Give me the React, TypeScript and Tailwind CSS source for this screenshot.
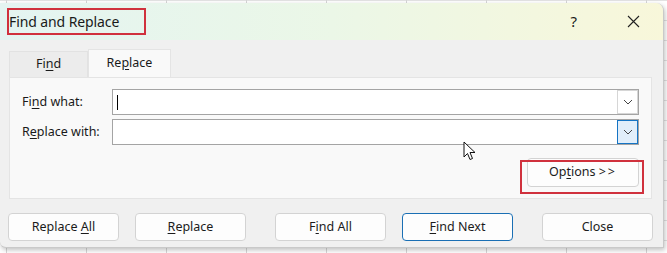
import React from 'react';

const font = { fontFamily: '"Noto Sans", "Open Sans", sans-serif' };

const Chevron: React.FC = () => (
  <svg width="10" height="6" viewBox="0 0 10 6" fill="none">
    <path d="M1 1 L5 5 L9 1" stroke="#444" strokeWidth="1" />
  </svg>
);

const ComboBox: React.FC<{ active?: boolean; caret?: boolean }> = ({ active, caret }) => (
  <div className="flex-1 h-[26px] flex items-stretch bg-white border border-[#a4a4a4]">
    <div className="flex-1 flex items-center pl-[4px]">
      {caret && <div className="w-px h-[15px] bg-black" />}
    </div>
    <div
      className={`w-[21px] flex items-center justify-center border ${
        active ? 'bg-[#e1eefa] border-[#1574c4]' : 'bg-white border-[#d6d6d6]'
      }`}
    >
      <Chevron />
    </div>
  </div>
);

const Btn: React.FC<{ children: React.ReactNode; primary?: boolean }> = ({ children, primary }) => (
  <button
    className={`w-[111px] h-[28px] shrink-0 rounded-[4px] bg-[#fdfdfd] text-[12.5px] text-[#1b1b1b] border ${
      primary ? 'border-[#1a6fb4]' : 'border-[#d3d3d3]'
    }`}
  >
    {children}
  </button>
);

const u = (c: string) => <span className="underline underline-offset-2">{c}</span>;

export default function App() {
  return (
    <div
      style={font}
      className="relative w-[667px] h-[253px] overflow-hidden bg-white bg-[linear-gradient(to_right,#d6d6d6_1px,transparent_1px),linear-gradient(to_bottom,#e2e2e2_1px,transparent_1px)] bg-[size:80px_20px] bg-[position:6px_0]"
    >
      <div className="mt-[3px] w-[664px] h-[245px] flex flex-col bg-[#f0f0f0] rounded-tr-[8px] rounded-bl-[6px] overflow-hidden border-r border-b border-[#c9c9c9] shadow-[1px_2px_5px_rgba(0,0,0,0.25)]">
        {/* title bar */}
        <div className="h-[37px] shrink-0 flex items-center bg-gradient-to-r from-[#e4f4f1] via-[#ebf7e7] to-[#f8f7da]">
          <div className="ml-[7px] h-[27px] flex items-center border-2 border-[#d0313d]">
            <span className="text-[14px] text-[#1a1a1a] w-[135px] tracking-[-0.1px]">Find and Replace</span>
          </div>
          <div className="flex-1" />
          <span className="text-[15px] text-[#1a1a1a] mr-[50px]">?</span>
          <svg width="13" height="13" viewBox="0 0 13 13" className="mr-[23px]">
            <path d="M1 1 L12 12 M12 1 L1 12" stroke="#222" strokeWidth="1.1" />
          </svg>
        </div>

        {/* body */}
        <div className="flex-1 flex flex-col pl-[9px] pr-[11px] pt-[10px]">
          <div className="flex items-end h-[27px] text-[12.5px] text-[#1a1a1a]">
            <div className="w-[79px] h-[26px] flex items-center justify-center bg-[#ececec] border border-b-0 border-[#e2e2e2]">
              Fi{u('n')}d
            </div>
            <div className="w-[83px] h-[28px] flex items-center justify-center bg-[#f9f9f9] border border-b-0 border-[#e4e4e4]">
              Re{u('p')}lace
            </div>
          </div>
          <div className="h-[122px] bg-[#f9f9f9] border border-[#e4e4e4] px-[12px] pt-[11px] flex flex-col text-[12.5px] text-[#1a1a1a]">
            <div className="flex items-center">
              <span className="w-[90px]">Fi{u('n')}d what:</span>
              <ComboBox caret />
            </div>
            <div className="flex items-center mt-[4px]">
              <span className="w-[90px]">R{u('e')}place with:</span>
              <ComboBox active />
            </div>
            <div className="flex justify-end mt-[13px]">
              <button className="w-[112px] h-[29px] rounded-[4px] bg-[#fdfdfd] border border-[#d3d3d3] text-[12.5px] text-[#1b1b1b]">
                Op{u('t')}ions <span className="tracking-[2px]">&gt;&gt;</span>
              </button>
            </div>
          </div>
          <div className="flex mt-[14px] -ml-px">
            <Btn>Replace {u('A')}ll</Btn>
            <div className="w-[16px] shrink-0" />
            <Btn>{u('R')}eplace</Btn>
            <div className="w-[29px] shrink-0" />
            <Btn>F{u('i')}nd All</Btn>
            <div className="w-[16px] shrink-0" />
            <Btn primary>{u('F')}ind Next</Btn>
            <div className="w-[29px] shrink-0" />
            <Btn>Close</Btn>
          </div>
        </div>
      </div>

      {/* red highlight around Options */}
      <div className="absolute left-[520px] top-[160px] w-[124px] h-[34px] border-2 border-[#d0313d]" />

      {/* mouse pointer */}
      <svg className="absolute left-[463px] top-[141px]" width="14" height="21" viewBox="0 0 14 21">
        <path d="M1 1 L1 16 L4.5 12.5 L7 18.5 L9.5 17.5 L7 11.5 L12 11.5 Z" fill="#fff" stroke="#111" strokeWidth="1" strokeLinejoin="round" />
      </svg>
    </div>
  );
}
